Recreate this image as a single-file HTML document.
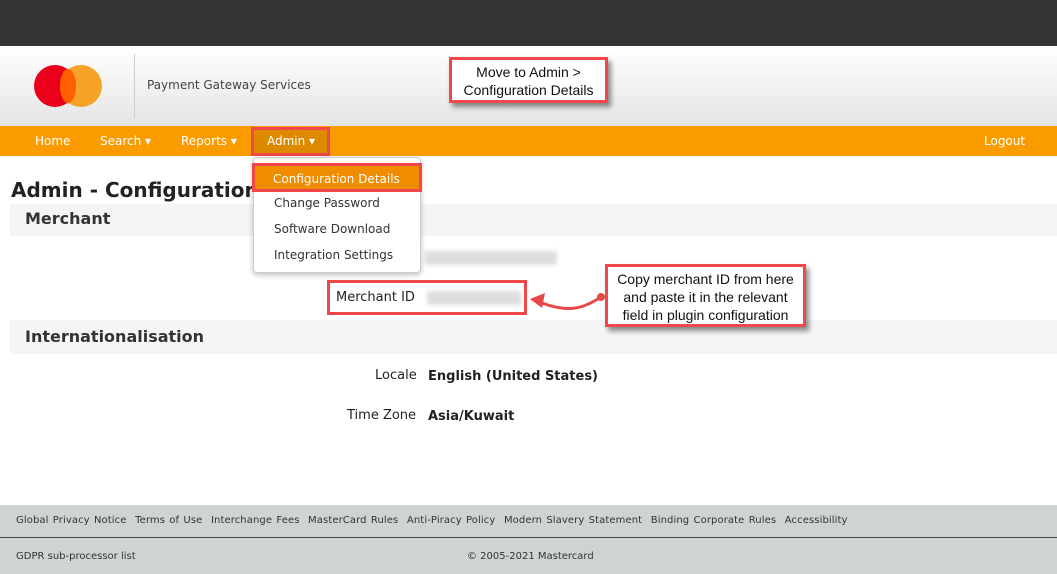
<!DOCTYPE html>
<html><head><meta charset="utf-8"><style>
*{margin:0;padding:0;box-sizing:border-box}
body{width:1057px;height:574px;overflow:hidden;position:relative;background:#fff;font-family:"DejaVu Sans","Liberation Sans",sans-serif;color:#222}
.abs{position:absolute}
.top{left:0;top:0;width:1057px;height:46px;background:#333}
.hdr{left:0;top:46px;width:1057px;height:80px;background:linear-gradient(#fff,#e4e4e4)}
.nav{left:0;top:126px;width:1057px;height:30px;background:#fa9c00;color:#fff;font-size:12px}
.nav span{position:absolute;top:8px}
.call{background:#fff;border:3px solid #f04848;box-shadow:3px 4px 5px rgba(0,0,0,.45);font-family:"Liberation Sans",sans-serif;font-size:14px;color:#111;text-align:center;line-height:18px}
.bar{background:#f5f5f5;font-weight:bold;font-size:16px;color:#333;padding-left:15px}
.lbl{font-size:13px;color:#222}
.blur{background:#ddd;filter:blur(2px)}
.foot{font-size:10px;color:#333}
</style></head><body>
<div class="abs top"></div>
<div class="abs hdr"></div>
<div class="abs" style="left:34px;top:65px;width:42px;height:42px;border-radius:50%;background:#eb001b"></div>
<div class="abs" style="left:60px;top:65px;width:42px;height:42px;border-radius:50%;background:#f79e1b;opacity:.95"></div>
<div class="abs" style="left:60px;top:69px;width:16px;height:34px;background:#ff5f00;border-radius:50%/50%"></div>
<div class="abs" style="left:134px;top:54px;width:1px;height:64px;background:#ccc"></div>
<div class="abs" style="left:147px;top:78px;font-size:12px;color:#444">Payment Gateway Services</div>
<div class="abs call" style="left:449px;top:57px;width:159px;height:46px;padding-top:3px">Move to Admin &gt;<br>Configuration Details</div>
<div class="abs nav">
<span style="left:35px">Home</span>
<span style="left:100px">Search ▾</span>
<span style="left:181px">Reports ▾</span>
<div class="abs" style="left:251px;top:1px;width:79px;height:29px;background:#de8a00;border:3px solid #f04848"></div>
<span style="left:267px">Admin ▾</span>
<span style="left:984px">Logout</span>
</div>
<div class="abs" style="left:11px;top:178px;font-size:20px;font-weight:bold;color:#222">Admin - Configuration</div>
<div class="abs bar" style="left:10px;top:204px;width:1047px;height:32px;line-height:30px">Merchant</div>
<div class="abs bar" style="left:10px;top:320px;width:1047px;height:34px;line-height:34px">Internationalisation</div>
<div class="abs blur" style="left:425px;top:251px;width:132px;height:14px"></div>
<div class="abs" style="left:327px;top:280px;width:200px;height:35px;border:3px solid #f04848"></div>
<div class="abs lbl" style="left:336px;top:290px">Merchant ID</div>
<div class="abs blur" style="left:427px;top:291px;width:94px;height:14px"></div>
<svg class="abs" style="left:525px;top:285px" width="90" height="35"><path d="M76 12 C60 22 45 30 12 16" stroke="#e84848" stroke-width="3" fill="none"/><circle cx="76" cy="12" r="4" fill="#e84848"/><path d="M5 14 L20 8 L17 23 Z" fill="#e84848"/></svg>
<div class="abs call" style="left:605px;top:264px;width:201px;height:63px;padding-top:3px">Copy merchant ID from here<br>and paste it in the relevant<br>field in plugin configuration</div>
<div class="abs lbl" style="left:375px;top:368px">Locale</div>
<div class="abs" style="left:428px;top:369px;font-size:13px;font-weight:bold">English (United States)</div>
<div class="abs lbl" style="left:347px;top:408px">Time Zone</div>
<div class="abs" style="left:428px;top:409px;font-size:13px;font-weight:bold">Asia/Kuwait</div>
<div class="abs" style="left:253px;top:157px;width:168px;height:116px;background:#fff;border:1px solid #ccc;border-radius:4px;box-shadow:0 2px 6px rgba(0,0,0,.25);font-size:12px;color:#333">
<div style="position:absolute;left:-2px;top:5px;width:170px;height:29px;background:#f08c00;border:3px solid #f04848;color:#fff;padding:6px 0 0 18px">Configuration Details</div>
<div style="position:absolute;left:20px;top:38px">Change Password</div>
<div style="position:absolute;left:20px;top:64px">Software Download</div>
<div style="position:absolute;left:20px;top:90px">Integration Settings</div>
</div>
<div class="abs" style="left:0;top:505px;width:1057px;height:69px;background:#d0d3d4"></div>
<div class="abs" style="left:0;top:537px;width:1057px;height:1px;background:#444"></div>
<div class="abs foot" style="left:16px;top:515px;word-spacing:1px;letter-spacing:0.1px">Global Privacy Notice&nbsp; Terms of Use&nbsp; Interchange Fees&nbsp; MasterCard Rules&nbsp; Anti-Piracy Policy&nbsp; Modern Slavery Statement&nbsp; Binding Corporate Rules&nbsp; Accessibility</div>
<div class="abs foot" style="left:16px;top:551px">GDPR sub-processor list</div>
<div class="abs foot" style="left:467px;top:551px">© 2005-2021 Mastercard</div>
</body></html>
